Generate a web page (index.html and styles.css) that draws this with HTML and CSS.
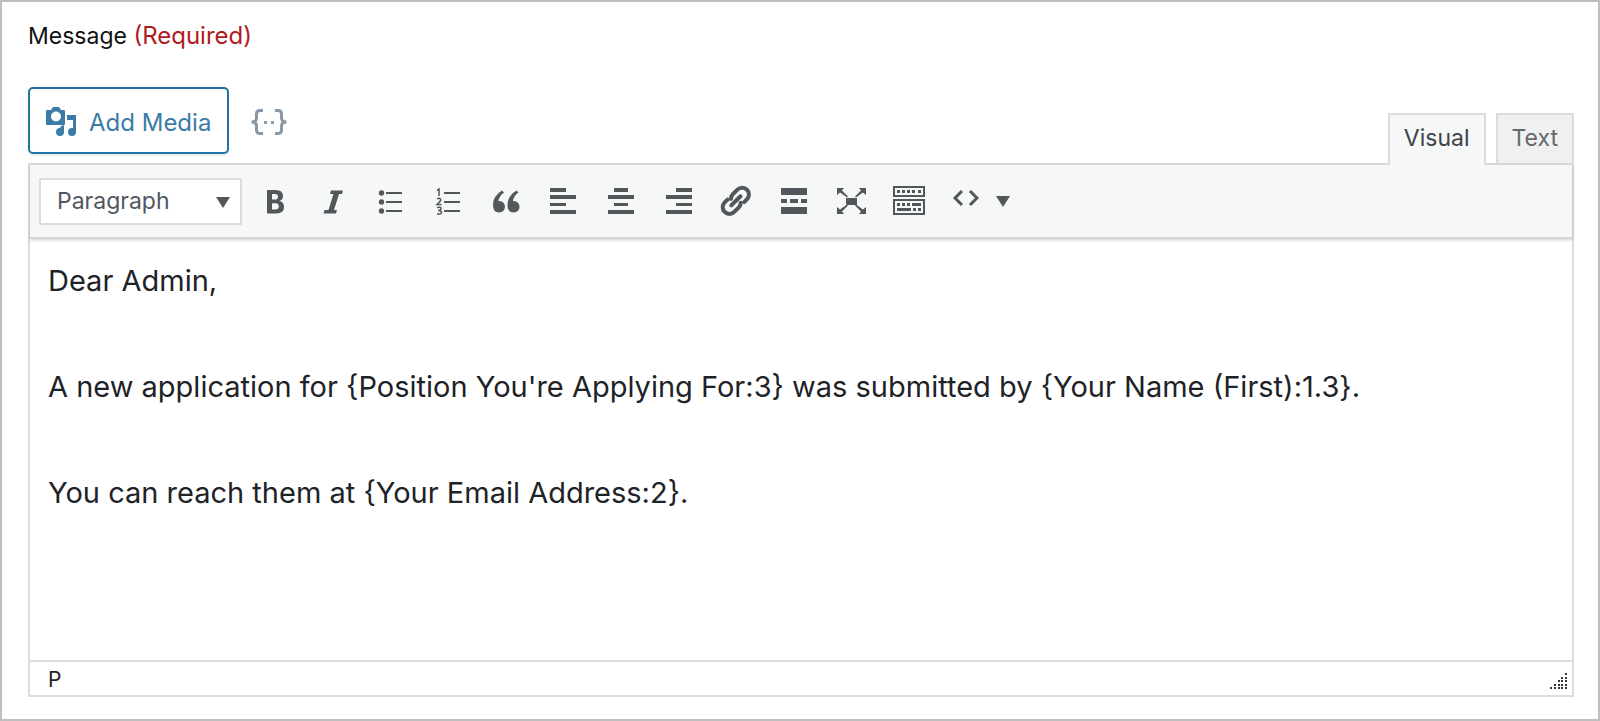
FILE: index.html
```html
<!DOCTYPE html>
<html lang="en">
<head>
	<meta charset="utf-8">
	<title>Message</title>
	<link rel="stylesheet" href="styles.css">
</head>
<body>
	<div class="field">
		<label class="field-label" for="message">Message <span class="required">(Required)</span></label>
		<div class="editor-tools">
			<button type="button" class="add-media">
				<svg class="media-icon" viewBox="0 0 30 30">
					<path fill-rule="evenodd" d="M2 3h3l2-3h6l2 3h3q1 0 1 1v13q0 1-1 1H1q-1 0-1-1V4q0-1 1-1zM10 4.500a5 5 0 1 0 0 10a5 5 0 1 0 0-10z"/>
					<path d="M21 8h9v17a4 4 0 1 1-4-4h1v-8h-6z"/>
					<path d="M18 18v7a4 4 0 1 1-4-4l1-2z"/>
				</svg>
				Add Media
			</button>
			<button type="button" class="merge-tags" aria-label="Merge tags">
				<svg width="36" height="26" viewBox="0 0 36 26">
					<path d="M12 1.500H9Q5.500 1.500 5.500 5v4q0 4-5 4q5 0 5 4v4q0 3.500 3.500 3.500h3M24 1.500h3q3.500 0 3.500 3.500v4q0 4 5 4q-5 0-5 4v4q0 3.500-3.500 3.500h-3"/>
					<path class="dots" d="M13 12h3v3h-3zM20 12h3v3h-3z"/>
				</svg>
			</button>
			<div class="tabs">
				<button type="button" class="tab active">Visual</button>
				<button type="button" class="tab">Text</button>
			</div>
		</div>
		<div class="editor">
			<div class="toolbar">
				<div class="format">
					<select aria-label="Format">
						<option>Paragraph</option>
						<option>Heading 1</option>
						<option>Heading 2</option>
					</select>
					<svg class="caret" viewBox="0 0 14 11"><path d="M0 0h14L7 11z"/></svg>
				</div>
				<div class="tool-group">
					<button type="button" class="tool" aria-label="Bold">
						<svg viewBox="0 0 40 40"><path fill-rule="evenodd" d="M12 9h8.500q7.500 0 7.500 6q0 4-3.500 5q4.500 1 4.500 6q0 6.500-8 6.500h-9zM17 13v5.500h3q3 0 3-2.800q0-2.700-3-2.700zM17 22.300v6.200h3.500q3.300 0 3.300-3.200q0-3-3.300-3z"/></svg>
					</button>
					<button type="button" class="tool" aria-label="Italic">
						<svg viewBox="0 0 40 40"><path d="M18 9.500h12l-1 3.500h-3l-5 16h3l-1 3.500H10.500l1-3.500h4l5-16H17z"/></svg>
					</button>
					<button type="button" class="tool" aria-label="Bulleted list">
						<svg viewBox="0 0 40 40">
							<circle cx="11.500" cy="12" r="2.700"/><circle cx="11.500" cy="21" r="2.700"/><circle cx="11.500" cy="30" r="2.700"/>
							<path d="M16 11h16v2H16zM16 20h16v2H16zM16 29h16v2H16z"/>
						</svg>
					</button>
					<button type="button" class="tool" aria-label="Numbered list">
						<svg viewBox="0 0 40 40">
							<path class="thin" d="M9 9.500l2-1.500v7M9 18q1.500-1.200 3-.5q1.500 1.500-.5 3.500L9 23.500h4.500M9 26.500q4-1 4 1t-3 2q3.500 0 3.500 2t-4.500 1.500"/>
							<path d="M16 11h16v2H16zM16 20h16v2H16zM16 29h16v2H16z"/>
						</svg>
					</button>
					<button type="button" class="tool" aria-label="Blockquote">
						<svg viewBox="0 0 40 40">
							<path d="M16 9.500l2 2q-5 3.500-5.500 8.500q6 0 6.500 5.500q0 5.500-6 6q-6 0-6-7.500q0-9 9-14.500z"/>
							<path d="M30.500 9.500l2 2q-5 3.500-5.500 8.500q6 0 6.500 5.500q0 5.500-6 6q-6 0-6-7.500q0-9 9-14.500z"/>
						</svg>
					</button>
					<button type="button" class="tool" aria-label="Align left">
						<svg viewBox="0 0 40 40"><path d="M7 7h16v4H7zM7 14h26v4H7zM7 22h16v3H7zM7 29h26v4H7z"/></svg>
					</button>
					<button type="button" class="tool" aria-label="Align center">
						<svg viewBox="0 0 40 40"><path d="M13 7h14v4H13zM7 14h26v4H7zM13 22h14v3H13zM7 29h26v4H7z"/></svg>
					</button>
					<button type="button" class="tool" aria-label="Align right">
						<svg viewBox="0 0 40 40"><path d="M17 7h16v4H17zM7 14h26v4H7zM17 22h16v3H17zM7 29h26v4H7z"/></svg>
					</button>
					<button type="button" class="tool" aria-label="Insert link">
						<svg viewBox="0 0 40 40">
							<g class="link-icon" transform="rotate(-45 20 20)">
								<path d="M18 15q1.500-2 4.500-2H29a6.500 6.500 0 0 1 0 13.500h-4M22 24.500q-1.500 2-4.500 2H11a6.500 6.500 0 0 1 0-13.500h4"/>
								<path d="M13.500 19.800h13"/>
							</g>
						</svg>
					</button>
					<button type="button" class="tool" aria-label="Read more">
						<svg viewBox="0 0 40 40"><path d="M7 7h26v7H7zM7 18h6v4H7zM16 18h8v4h-8zM27 18h6v4h-6zM7 26h26v7H7z"/></svg>
					</button>
					<button type="button" class="tool" aria-label="Fullscreen">
						<svg viewBox="0 0 40 40"><path d="M14 17h11v7H14zM5 7h7l-2 2.500l6 6l-1 1l-7-5L5 14zM34 7h-7l2 2.500l-6 6l1 1l7-5l3 2.500zM5 33h7l-2-2.500l6-6l-1-1l-7 5L5 26zM34 33h-7l2-2.500l-6-6l1-1l7 5l3-2.500z"/></svg>
					</button>
					<button type="button" class="tool" aria-label="Toolbar toggle">
						<svg viewBox="0 0 40 40"><path fill-rule="evenodd" d="M4 5h32v11H4zM6 7v7h28V7zM4 18h32v16H4zM6 20v12h28V20zM8 9h3v3H8zM13 9h3v3h-3zM18 9h3v3h-3zM23 9h3v3h-3zM29 9h3v3h-3zM8 22h3v3H8zM13 22h3v3h-3zM18 22h3v3h-3zM23 22h9v3h-9zM8 27h14v3H8zM24 27h3v3h-3zM29 27h3v3h-3z"/></svg>
					</button>
				</div>
				<button type="button" class="code-menu" aria-label="Shortcodes">
					<svg viewBox="0 0 26 22"><path d="M9 1L2 8l7 7M17 1l7 7l-7 7"/></svg>
					<svg class="caret" viewBox="0 0 14 11"><path d="M0 0h14L7 11z"/></svg>
				</button>
			</div>
			<textarea id="message" spellcheck="false">Dear Admin,

A new application for {Position You're Applying For:3} was submitted by {Your Name (First):1.3}.

You can reach them at {Your Email Address:2}.</textarea>
			<div class="statusbar">
				<span>P</span>
				<svg class="grip" viewBox="0 0 18 18">
					<path d="M15 0h2v2h-2zM11 4h2v2h-2zM15 4h2v2h-2zM8 7h2v2H8zM11 7h2v2h-2zM15 7h2v2h-2zM4 11h2v2H4zM8 11h2v2H8zM11 11h2v2h-2zM15 11h2v2h-2zM0 14h2v2H0zM4 14h2v2H4zM8 14h2v2H8zM11 14h2v2h-2zM15 14h2v2h-2z"/>
				</svg>
			</div>
		</div>
	</div>
</body>
</html>
```

FILE: styles.css
```css
* {
	box-sizing: border-box;
}

body {
	margin: 0;
	font-family: Inter, sans-serif;
	font-size: 23px;
	color: #1d2327;
	background-color: #fff;
}

button,
select,
textarea {
	font: inherit;
	color: inherit;
	margin: 0;
}

button {
	cursor: pointer;
}

.field {
	display: flex;
	flex-direction: column;
	min-height: 100vh;
	padding: 18px 24px 22px 26px;
	border: 2px solid #bfbfbf;
}

.field-label {
	line-height: 32px;
	color: #111;
}

.required {
	font-size: 24px;
	color: #b01b1f;
}

.editor-tools {
	display: flex;
	align-items: flex-start;
	margin-top: 35px;
}

.add-media {
	display: flex;
	align-items: center;
	gap: 13px;
	height: 67px;
	margin-bottom: 9px;
	padding: 3px 16px 0 16px;
	font-size: 24px;
	color: #3a7ca5;
	background-color: #fff;
	border: 2px solid #1f74a3;
	border-radius: 5px;
	box-shadow: 0 2px 2px rgba(0, 0, 0, 0.08);
}

.media-icon {
	width: 30px;
	height: 30px;
	fill: #3a7ca5;
}

.merge-tags {
	margin: 22px 0 0 22px;
	padding: 0;
	border: none;
	background: none;
}

.merge-tags svg {
	display: block;
	fill: none;
	stroke: #8a98a5;
	stroke-width: 3;
}

.merge-tags .dots {
	fill: #8a98a5;
	stroke: none;
}

.tabs {
	display: flex;
	align-self: flex-end;
	gap: 10px;
	margin-left: auto;
}

.tab {
	height: 50px;
	padding: 0 14px 3px;
	color: #646970;
	background-color: #f0f0f0;
	border: 2px solid #dcdcdc;
	border-bottom: none;
}

.tab.active {
	height: 52px;
	margin-bottom: -2px;
	padding-bottom: 5px;
	position: relative;
	color: #3c434a;
	background-color: #f6f7f7;
}

.editor {
	flex: 1;
	display: flex;
	flex-direction: column;
	border: 2px solid #dcdcdc;
}

.toolbar {
	display: flex;
	align-items: center;
	height: 74px;
	padding-left: 9px;
	background-color: #f6f7f7;
	border-bottom: 2px solid #d8d8d8;
	box-shadow: 0 1px 3px rgba(0, 0, 0, 0.2);
}

.format {
	position: relative;
	width: 203px;
}

.format select {
	display: block;
	width: 100%;
	height: 47px;
	padding: 0 16px;
	color: #50575e;
	background-color: #fff;
	border: 2px solid #dcdcdc;
	border-radius: 0;
	appearance: none;
}

.caret {
	width: 14px;
	height: 11px;
	fill: #53565b;
}

.format .caret {
	position: absolute;
	top: 19px;
	right: 12px;
	pointer-events: none;
}

.tool-group {
	display: flex;
	width: 692px;
	margin-left: 4px;
}

.tool {
	flex: 1;
	display: flex;
	justify-content: center;
	padding: 0;
	border: none;
	background: none;
}

.tool svg {
	width: 40px;
	height: 40px;
	fill: #53565b;
}

.tool .thin {
	fill: none;
	stroke: #53565b;
	stroke-width: 1.5;
}

.tool .link-icon {
	fill: none;
	stroke: #53565b;
	stroke-width: 4;
	stroke-linecap: round;
}

.code-menu {
	display: flex;
	align-items: center;
	gap: 17px;
	margin-left: 15px;
	padding: 0;
	border: none;
	background: none;
}

.code-menu svg:first-child {
	width: 26px;
	height: 22px;
	fill: none;
	stroke: #53565b;
	stroke-width: 3;
}

textarea {
	flex: 1;
	padding: 15px 18px;
	font-size: 29px;
	line-height: 53px;
	border: none;
	outline: none;
	resize: none;
	background: none;
}

.statusbar {
	display: flex;
	align-items: center;
	justify-content: space-between;
	height: 35px;
	padding: 2px 4px 0 18px;
	font-size: 21px;
	border-top: 2px solid #dcdcdc;
}

.grip {
	width: 18px;
	height: 18px;
	margin-top: 4px;
	fill: #333;
}
```
